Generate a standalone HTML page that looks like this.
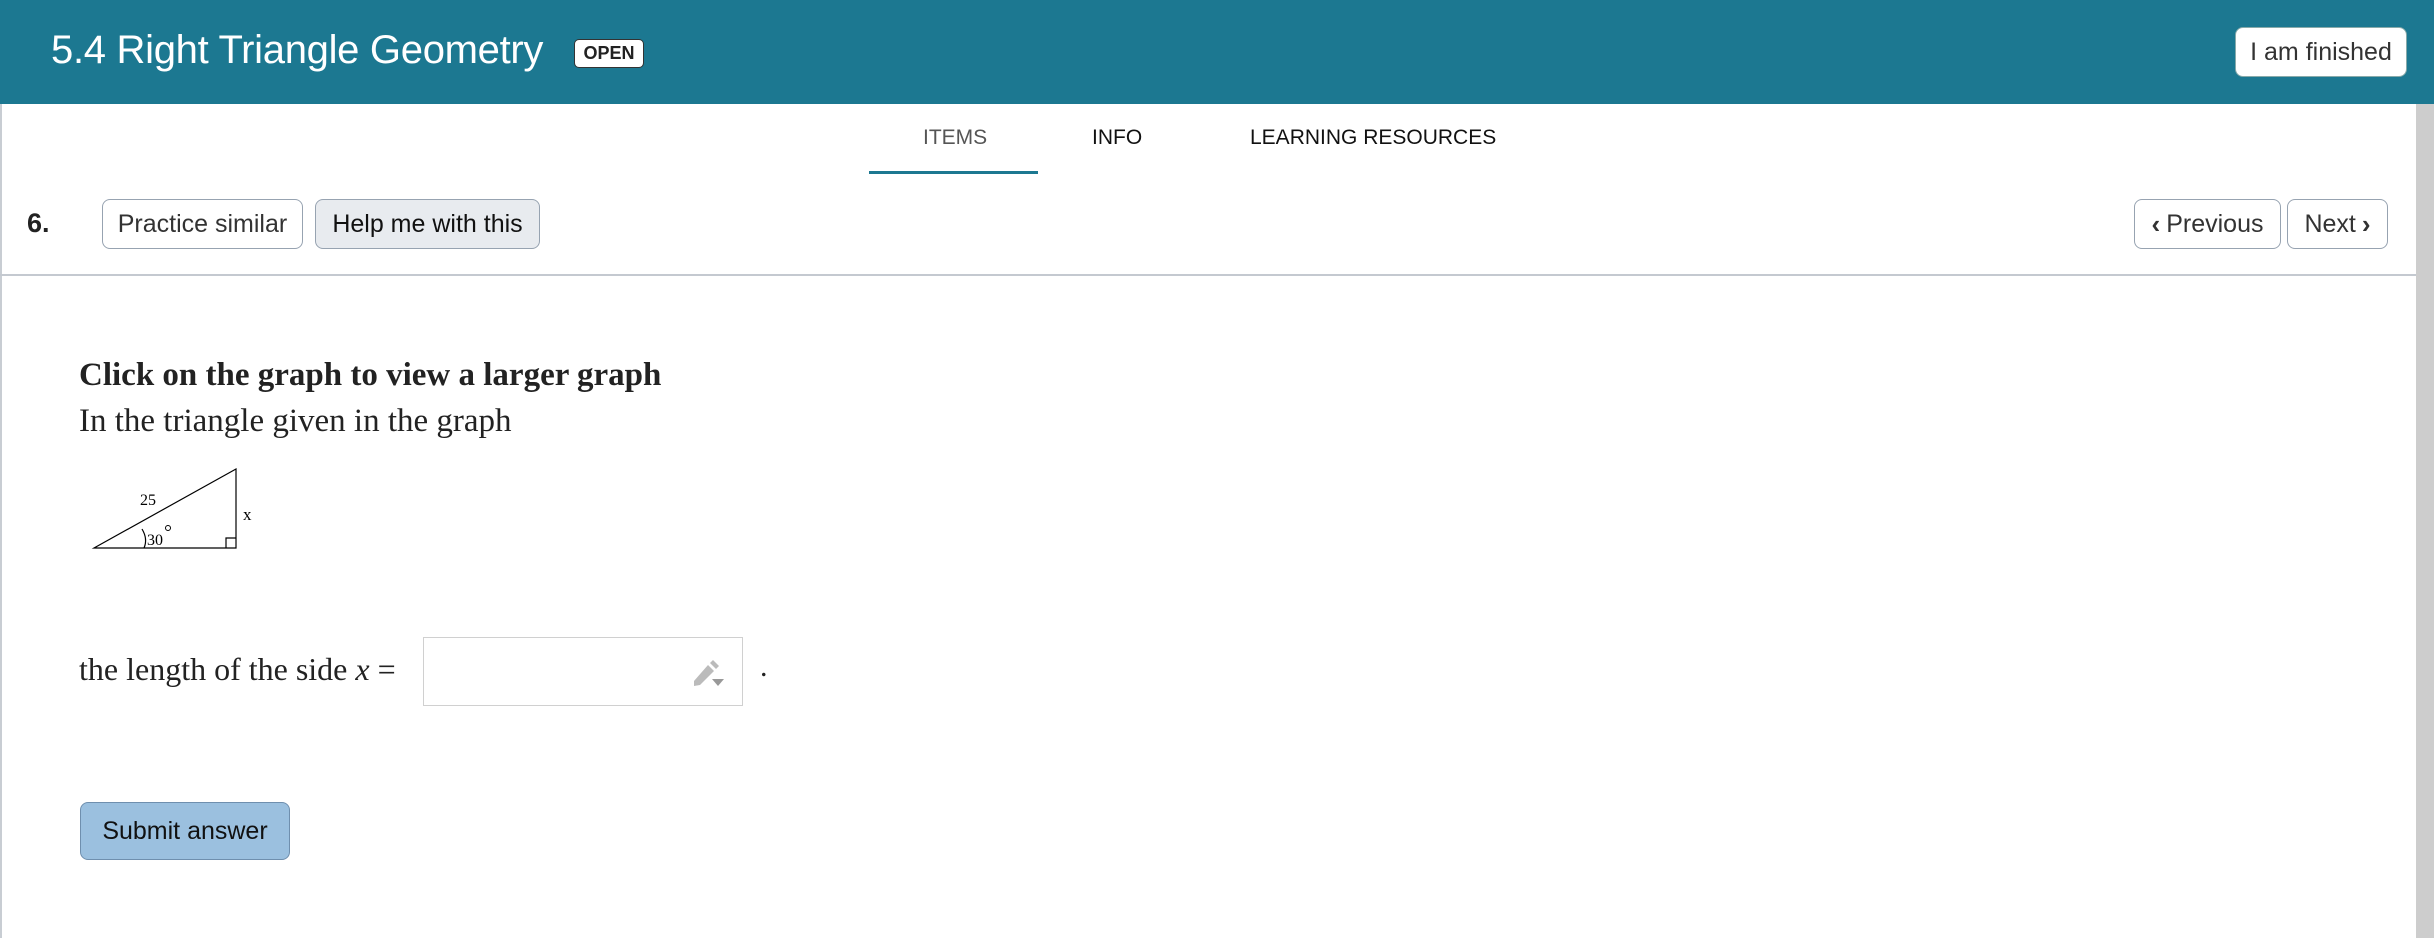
<!DOCTYPE html>
<html><head><meta charset="utf-8"><style>
*{margin:0;padding:0;box-sizing:border-box}
body{width:2434px;height:938px;overflow:hidden;background:#fff;position:relative;font-family:"Liberation Sans",sans-serif}
.a{position:absolute;white-space:nowrap}
.hdr{left:0;top:0;width:2434px;height:104px;background:#1c7891}
.btn{position:absolute;border:1.5px solid #97a3b1;border-radius:8px;background:#fff;color:#333;font-size:25px;display:flex;align-items:center;justify-content:center}
.serif{font-family:"Liberation Serif",serif;color:#222}
</style></head><body>
<div class="a hdr"></div>
<div class="a" style="left:51px;top:28px;font-size:40px;color:#fff;letter-spacing:-0.3px">5.4 Right Triangle Geometry</div>
<div class="a" style="left:574px;top:39px;width:70px;height:29px;background:#fff;border:1.5px solid #333;border-radius:5px;font-size:18px;font-weight:bold;color:#222;display:flex;align-items:center;justify-content:center">OPEN</div>
<div class="btn" style="left:2235px;top:27px;width:172px;height:50px;border-color:#8aa">I am finished</div>
<div class="a" style="left:2416px;top:104px;width:18px;height:834px;background:#cdcdcd"></div>
<div class="a" style="left:0;top:104px;width:2px;height:834px;background:#c8cdd3"></div>

<div class="a" style="left:923px;top:126px;font-size:21px;color:#555">ITEMS</div>
<div class="a" style="left:869px;top:171px;width:169px;height:3px;background:#1c7891"></div>
<div class="a" style="left:1092px;top:126px;font-size:21px;color:#111">INFO</div>
<div class="a" style="left:1250px;top:126px;font-size:21px;color:#111">LEARNING RESOURCES</div>

<div class="a" style="left:27px;top:208px;font-size:27px;font-weight:bold;color:#222">6.</div>
<div class="btn" style="left:102px;top:199px;width:201px;height:50px">Practice similar</div>
<div class="btn" style="left:315px;top:199px;width:225px;height:50px;background:#e8ebef;color:#111">Help me with this</div>
<div class="btn" style="left:2134px;top:199px;width:147px;height:50px"><span style="font-weight:bold;font-size:26px;margin-right:6px">&#8249;</span>Previous</div>
<div class="btn" style="left:2287px;top:199px;width:101px;height:50px">Next<span style="font-weight:bold;font-size:26px;margin-left:6px">&#8250;</span></div>
<div class="a" style="left:0;top:274px;width:2416px;height:2px;background:#c4c9d0"></div>

<div class="a serif" style="left:79px;top:357px;font-size:33px;font-weight:bold">Click on the graph to view a larger graph</div>
<div class="a serif" style="left:79px;top:403px;font-size:33px">In the triangle given in the graph</div>
<svg class="a" style="left:90px;top:465px" width="175" height="90">
<g stroke="#000" stroke-width="1.2" fill="none">
<path d="M4 83 L146 83 L146 4 Z"/>
<path d="M136 83 V73 H146"/>
<path d="M52 64 Q58 74 54 83"/>
</g>
<text x="50" y="40" font-family="Liberation Serif" font-size="16" fill="#000">25</text>
<text x="57" y="80" font-family="Liberation Serif" font-size="16" fill="#000">30</text>
<circle cx="78" cy="63" r="2.5" stroke="#000" fill="none" stroke-width="1"/>
<text x="153" y="55" font-family="Liberation Serif" font-size="17" fill="#000">x</text>
</svg>
<div class="a serif" style="left:79px;top:651px;font-size:32px">the length of the side <i>x</i> =</div>
<div class="a" style="left:423px;top:637px;width:320px;height:69px;border:1.5px solid #d0d0d0;background:#fff"></div>
<svg class="a" style="left:690px;top:655px" width="40" height="36"><path d="M4 26 L18 10 L24 16 L10 30 L4 31 Z" fill="#bbb"/><path d="M20 8 L23 5 L29 11 L26 14Z" fill="#bbb"/><path d="M22 24 L34 24 L28 31Z" fill="#999"/></svg>
<div class="a serif" style="left:760px;top:650px;font-size:30px">.</div>
<div class="btn" style="left:80px;top:802px;width:210px;height:58px;background:#9bc0df;border-color:#6f8fae;color:#111">Submit answer</div>
</body></html>
